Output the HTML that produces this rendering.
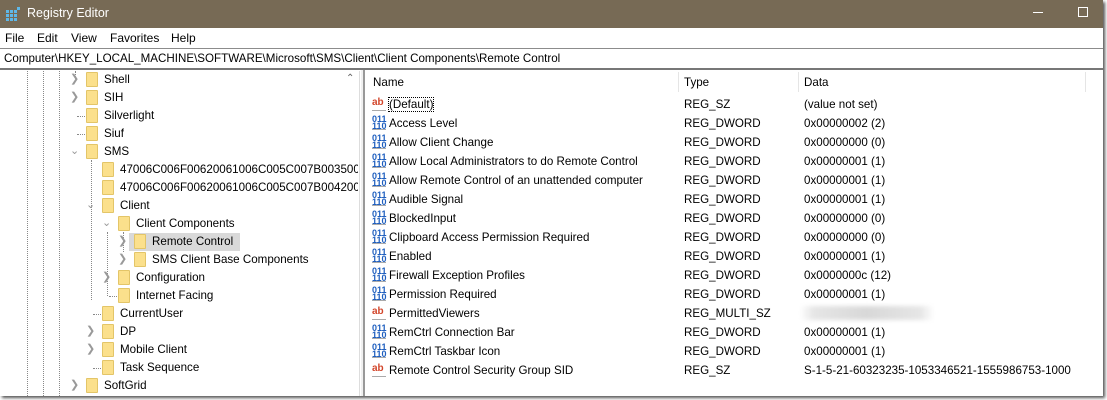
<!DOCTYPE html>
<html><head><style>
*{margin:0;padding:0;box-sizing:border-box}
body{width:1107px;height:400px;background:#fff;font-family:"Liberation Sans",sans-serif;font-size:11.6px;color:#000;position:relative;overflow:hidden}
.win{position:absolute;left:0;top:0;width:1103px;height:396px;background:#fff;box-shadow:2px 2px 3px #555}
.title{position:absolute;left:0;top:0;width:1103px;height:28px;background:#776a55;color:#fff;font-size:12.5px}
.menu{position:absolute;top:28px;left:0;height:20px;width:1103px;background:#fff;font-size:12px}
.menu span{position:absolute;top:3px}
.addr{position:absolute;top:48px;left:0;width:1103px;height:22px;border-top:1px solid #8c8c8c;border-bottom:2px solid #777;padding:3px 0 0 4px;background:#fff}
.t{position:absolute;white-space:nowrap}
.fold{position:absolute;width:12px;height:15px;background:#fbe08c;border:1px solid #e3c568;border-radius:1px}
.arr{position:absolute;color:#999;font-size:11px}
.dv{position:absolute;border-left:1px dotted #888;width:0}
.dh{position:absolute;border-top:1px dotted #888;height:0}
.ic{position:absolute;width:14px;height:14px;font-size:9px;font-weight:bold;line-height:7px}
#treebox{position:absolute;left:0;top:70px;width:358px;height:326px;overflow:hidden}
</style></head><body>
<div class="win">
<div class="title">
 <svg style="position:absolute;left:6px;top:7px" width="14" height="14"><g fill="#5fb8e8"><rect x="0" y="3" width="3" height="3"/><rect x="4" y="3" width="3" height="3"/><rect x="8" y="3" width="3" height="3"/><rect x="0" y="7" width="3" height="3"/><rect x="4" y="7" width="3" height="3"/><rect x="8" y="7" width="3" height="3"/><rect x="0" y="11" width="3" height="3"/><rect x="4" y="11" width="3" height="3"/><rect x="8" y="11" width="3" height="3"/><rect x="11" y="0" width="3" height="3"/></g></svg>
 <span class="t" style="left:27px;top:6px">Registry Editor</span>
 <div style="position:absolute;left:1033px;top:12px;width:10px;height:1px;background:#fff"></div>
 <div style="position:absolute;left:1078px;top:7px;width:10px;height:10px;border:1px solid #fff"></div>
</div>
<div class="menu"><span style="left:5px">File</span><span style="left:37px">Edit</span><span style="left:71px">View</span><span style="left:110px">Favorites</span><span style="left:171px">Help</span></div>
<div class="addr">Computer\HKEY_LOCAL_MACHINE\SOFTWARE\Microsoft\SMS\Client\Client Components\Remote Control</div>

<div id="treebox">
<div style="position:absolute;left:129px;top:163px;width:111px;height:18px;background:#d9d9d9"></div>
<div class="dv" style="left:27px;top:1px;height:325px"></div>
<div class="dv" style="left:43px;top:1px;height:325px"></div>
<div class="dv" style="left:59px;top:1px;height:325px"></div>
<div class="dv" style="left:75px;top:1px;height:10px"></div>
<div class="dv" style="left:91px;top:90px;height:140px"></div>
<div class="dv" style="left:107px;top:162px;height:64px"></div>
<div class="dv" style="left:123px;top:162px;height:20px"></div>
<div class="dh" style="left:77px;top:46px;width:8px"></div>
<div class="dh" style="left:77px;top:64px;width:8px"></div>
<div class="dh" style="left:93px;top:244px;width:8px"></div>
<div class="dh" style="left:93px;top:298px;width:8px"></div>
<div class="dh" style="left:109px;top:226px;width:8px"></div>
<div id="tree"></div>
</div>
<div style="position:absolute;left:359px;top:71px;width:1px;height:325px;background:#ddd"></div>
<span class="t" style="left:346px;top:73px;color:#666;font-size:10px">&#8963;</span>
<div style="position:absolute;left:361px;top:70px;width:2px;height:326px;background:#f0f0f0"></div>
<div style="position:absolute;left:363px;top:70px;width:2px;height:326px;background:#999"></div>

<span class="t" style="left:373px;top:76px">Name</span>
<span class="t" style="left:684px;top:76px">Type</span>
<span class="t" style="left:804px;top:76px">Data</span>
<div style="position:absolute;left:678px;top:72px;width:1px;height:20px;background:#e5e5e5"></div>
<div style="position:absolute;left:798px;top:72px;width:1px;height:20px;background:#e5e5e5"></div>
<div style="position:absolute;left:1085px;top:72px;width:1px;height:20px;background:#e5e5e5"></div>
<div id="list"></div>
<div style="position:absolute;left:800px;top:306px;width:134px;height:14px;background:linear-gradient(90deg,#fff,#e6e6e6 10%,#d8d8d8 50%,#e6e6e6 90%,#fff);filter:blur(2px)"></div>
</div>
<script>
var T=[["Shell",0,">"],["SIH",0,">"],["Silverlight",0,""],["Siuf",0,""],["SMS",0,"v"],["47006C006F00620061006C005C007B003500",1,""],["47006C006F00620061006C005C007B004200",1,""],["Client",1,"v"],["Client Components",2,"v"],["Remote Control",3,">"],["SMS Client Base Components",3,">"],["Configuration",2,">"],["Internet Facing",2,""],["CurrentUser",1,""],["DP",1,">"],["Mobile Client",1,">"],["Task Sequence",1,""],["SoftGrid",0,">"]];
var h="";T.forEach(function(r,i){var y=i*18,o=r[1]*16;
if(r[2])h+='<span class="arr" style="left:'+(70+o)+'px;top:'+(y+2)+'px">'+(r[2]==">"?"&#10095;":"&#8964;")+'</span>';
h+='<div class="fold" style="left:'+(86+o)+'px;top:'+(y+2)+'px"></div>';
h+='<span class="t" style="left:'+(104+o)+'px;top:'+(y+3)+'px">'+r[0]+'</span>';});
document.getElementById("tree").innerHTML=h;
var L=[["(Default)","REG_SZ","(value not set)"],["Access Level","REG_DWORD","0x00000002 (2)"],["Allow Client Change","REG_DWORD","0x00000000 (0)"],["Allow Local Administrators to do Remote Control","REG_DWORD","0x00000001 (1)"],["Allow Remote Control of an unattended computer","REG_DWORD","0x00000001 (1)"],["Audible Signal","REG_DWORD","0x00000001 (1)"],["BlockedInput","REG_DWORD","0x00000000 (0)"],["Clipboard Access Permission Required","REG_DWORD","0x00000000 (0)"],["Enabled","REG_DWORD","0x00000001 (1)"],["Firewall Exception Profiles","REG_DWORD","0x0000000c (12)"],["Permission Required","REG_DWORD","0x00000001 (1)"],["PermittedViewers","REG_MULTI_SZ",""],["RemCtrl Connection Bar","REG_DWORD","0x00000001 (1)"],["RemCtrl Taskbar Icon","REG_DWORD","0x00000001 (1)"],["Remote Control Security Group SID","REG_SZ","S-1-5-21-60323235-1053346521-1555986753-1000"]];
h="";L.forEach(function(r,i){var y=95+i*19;var sz=r[1].indexOf("SZ")>=0;
h+='<div class="ic" style="left:372px;top:'+(y+2)+'px;'+(sz?'color:#d2452a;font-size:10px;line-height:12px':'color:#1f5fbf')+';border-bottom:1px solid #aaa">'+(sz?'ab':'011<br>110')+'</div>';
h+='<span class="t" style="left:389px;top:'+(y+3)+'px;'+(i==0?'outline:1px dotted #000;outline-offset:0':'')+'">'+r[0]+'</span>';
h+='<span class="t" style="left:684px;top:'+(y+3)+'px">'+r[1]+'</span>';
h+='<span class="t" style="left:804px;top:'+(y+3)+'px">'+r[2]+'</span>';});
document.getElementById("list").innerHTML=h;
</script>
</body></html>
